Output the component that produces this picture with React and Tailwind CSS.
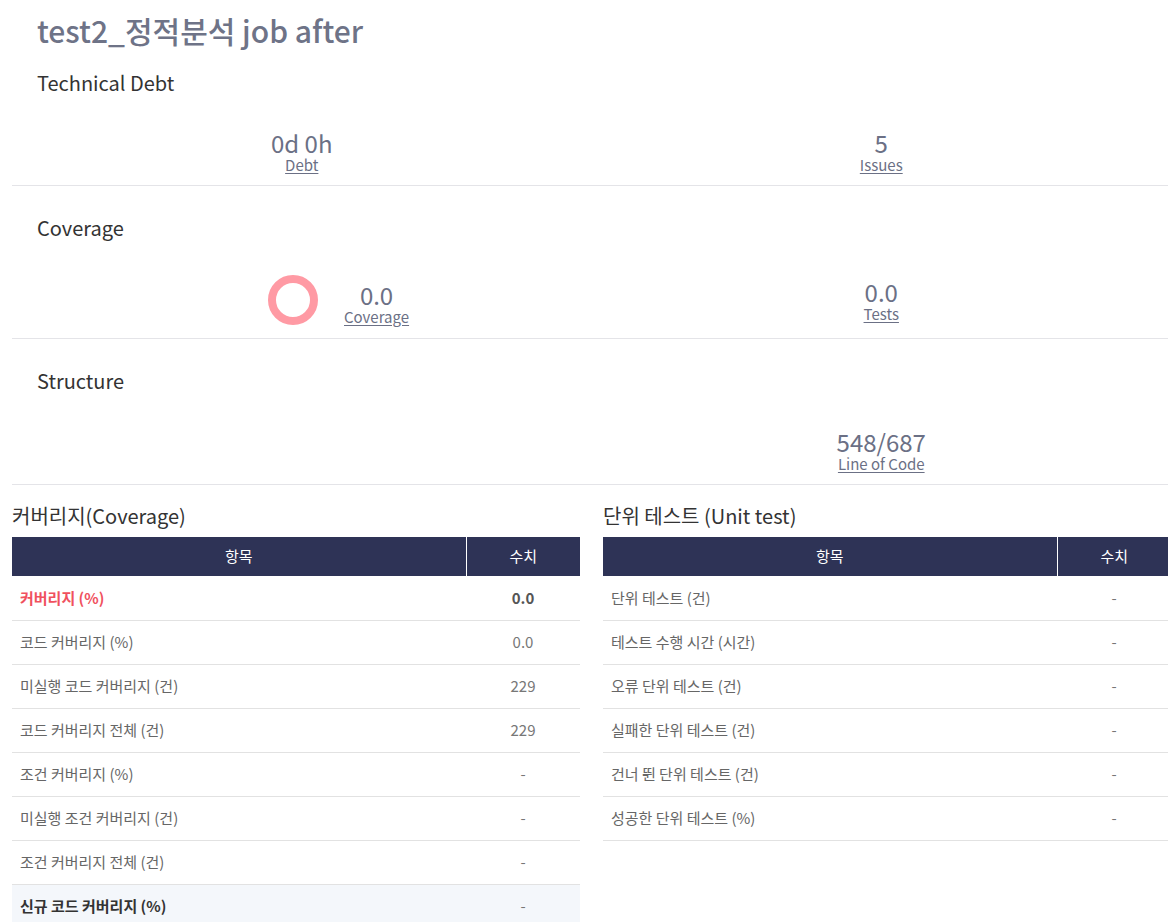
import React from "react";

const font = { fontFamily: '"Noto Sans CJK KR", "Noto Sans", sans-serif' };

function Metric({ value, label, alignEnd }) {
  return (
    <div className={"flex flex-col items-center " + (alignEnd ? "self-end" : "")}>
      <div className="text-[24px] leading-[28px] text-[#6b7085]">{value}</div>
      <a className="text-[15px] leading-[16px] text-[#6b7085] underline underline-offset-2 cursor-pointer">{label}</a>
    </div>
  );
}

function Section({ title, pb, children }) {
  return (
    <div className={"border-b border-[#e4e4e8] pt-[30px] " + pb}>
      <h2 className="pl-[25px] text-[20px] leading-[24px] text-[#333] font-normal">{title}</h2>
      {children}
    </div>
  );
}

function Table({ title, rows }) {
  return (
    <div className="w-[568px] shrink-0">
      <h3 className="text-[20px] leading-[24px] text-[#333] font-normal mb-[9px]">{title}</h3>
      <table className="w-full border-collapse text-[15px]">
        <thead>
          <tr className="bg-[#2e3356] text-white h-[39px]">
            <th className="w-[454px] font-normal text-[15px] border-r border-white">항목</th>
            <th className="font-normal text-[15px]">수치</th>
          </tr>
        </thead>
        <tbody>
          {rows.map((r, i) => (
            <tr key={i} className={"h-[44px] border-b border-[#e2e2e2] " + (r.bg ? "bg-[#f4f7fb]" : "")}>
              <td className={"pl-[8px] " + (r.red ? "text-[#f0515e] font-bold" : r.bold ? "text-[#333] font-bold" : "text-[#666]")}>{r.name}</td>
              <td className={"text-center " + (r.boldVal ? "text-[#555] font-bold" : "text-[#777]")}>{r.value}</td>
            </tr>
          ))}
        </tbody>
      </table>
    </div>
  );
}

export default function App() {
  const cov = [
    { name: "커버리지 (%)", value: "0.0", red: true, boldVal: true },
    { name: "코드 커버리지 (%)", value: "0.0" },
    { name: "미실행 코드 커버리지 (건)", value: "229" },
    { name: "코드 커버리지 전체 (건)", value: "229" },
    { name: "조건 커버리지 (%)", value: "-" },
    { name: "미실행 조건 커버리지 (건)", value: "-" },
    { name: "조건 커버리지 전체 (건)", value: "-" },
    { name: "신규 코드 커버리지 (%)", value: "-", bold: true, bg: true },
  ];
  const unit = [
    { name: "단위 테스트 (건)", value: "-" },
    { name: "테스트 수행 시간 (시간)", value: "-" },
    { name: "오류 단위 테스트 (건)", value: "-" },
    { name: "실패한 단위 테스트 (건)", value: "-" },
    { name: "건너 뛴 단위 테스트 (건)", value: "-" },
    { name: "성공한 단위 테스트 (%)", value: "-" },
  ];
  return (
    <div className="w-[1168px] h-[922px] overflow-hidden bg-white" style={font}>
      <div className="ml-[12px] w-[1159px]">
        <h1 className="pl-[25px] pt-[7px] text-[30px] leading-[46px] h-[41px] text-[#6e7387] font-medium">test2_정적분석 job after</h1>

        <Section title="Technical Debt" pb="pb-3">
          <div className="grid grid-cols-2 mt-[34px]">
            <Metric value="0d 0h" label="Debt" />
            <Metric value="5" label="Issues" />
          </div>
        </Section>

        <Section title="Coverage" pb="pb-[13px]">
          <div className="grid grid-cols-2 mt-[35px] h-[50px]">
            <div className="flex pl-[256px] gap-[26px]">
              <svg width="50" height="50" viewBox="0 0 50 50">
                <circle cx="25" cy="25" r="21" fill="none" stroke="#ff9aa4" strokeWidth="8" />
              </svg>
              <Metric value="0.0" label="Coverage" alignEnd />
            </div>
            <div className="flex justify-center items-center">
              <Metric value="0.0" label="Tests" />
            </div>
          </div>
        </Section>

        <Section title="Structure" pb="pb-3">
          <div className="grid grid-cols-2 mt-[35px]">
            <div />
            <Metric value="548/687" label="Line of Code" />
          </div>
        </Section>

        <div className="flex gap-[23px] mt-[19px]">
          <Table title="커버리지(Coverage)" rows={cov} />
          <Table title="단위 테스트 (Unit test)" rows={unit} />
        </div>
      </div>
    </div>
  );
}
